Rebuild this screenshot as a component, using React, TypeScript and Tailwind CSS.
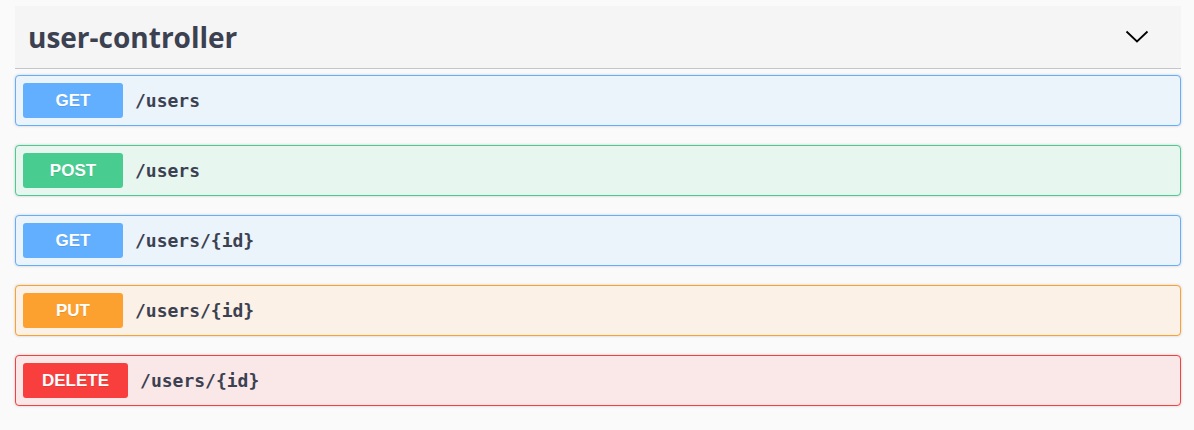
import React from "react";

type Method = "GET" | "POST" | "PUT" | "DELETE";

const styles: Record<Method, { box: string; badge: string }> = {
  GET: { box: "border-[#61affe] bg-[#ebf3fb]", badge: "bg-[#61affe]" },
  POST: { box: "border-[#49cc90] bg-[#e8f6f0]", badge: "bg-[#49cc90]" },
  PUT: { box: "border-[#fca130] bg-[#fbf1e6]", badge: "bg-[#fca130]" },
  DELETE: { box: "border-[#f93e3e] bg-[#fae7e7]", badge: "bg-[#f93e3e]" },
};

const ops: { method: Method; path: string }[] = [
  { method: "GET", path: "/users" },
  { method: "POST", path: "/users" },
  { method: "GET", path: "/users/{id}" },
  { method: "PUT", path: "/users/{id}" },
  { method: "DELETE", path: "/users/{id}" },
];

const OpBlock = ({ method, path }: { method: Method; path: string }) => {
  const s = styles[method];
  return (
    <div
      className={`flex items-center rounded-[4px] border px-[7px] py-[7px] shadow-[0_0_3px_rgba(0,0,0,0.19)] ${s.box}`}
    >
      <span
        className={`flex h-[35px] min-w-[100px] items-center justify-center rounded-[3px] px-[19px] text-[17px] font-bold text-white [text-shadow:0_1px_0_rgba(0,0,0,0.1)] ${s.badge}`}
        style={{ fontFamily: '"Liberation Sans", Arial, sans-serif' }}
      >
        {method}
      </span>
      <span
        className="pl-[12px] text-[18px] font-bold text-[#3b4151]"
        style={{ fontFamily: '"DejaVu Sans Mono", monospace' }}
      >
        {path}
      </span>
    </div>
  );
};

export default function App() {
  return (
    <div className="min-h-[430px] w-full bg-[#fafafa] pl-[15px] pr-[13px] pt-[6px]">
      {/* Tag header */}
      <div className="flex h-[63px] items-center justify-between border-b border-[#c4c6cb] bg-[#f5f5f5] pl-[13px] pr-[32px]">
        <h3
          className="text-[28px] font-bold text-[#3b4151]"
          style={{ fontFamily: '"Open Sans", "Noto Sans", sans-serif' }}
        >
          user-controller
        </h3>
        <svg width="24" height="14" viewBox="0 0 24 14" fill="none">
          <path d="M1.5 1.5 L12 11.5 L22.5 1.5" stroke="#000" strokeWidth="1.8" />
        </svg>
      </div>

      <div className="mt-[6px] flex flex-col gap-[19px]">
        {ops.map((op, i) => (
          <OpBlock key={i} method={op.method} path={op.path} />
        ))}
      </div>
    </div>
  );
}
